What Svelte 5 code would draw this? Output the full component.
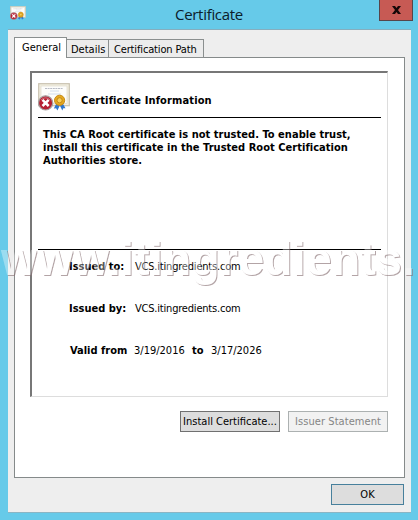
<script>
  const tabs = [
    { label: 'General', cls: 'general' },
    { label: 'Details', cls: 'details' },
    { label: 'Certification Path', cls: 'path' }
  ];
  const message = [
    { text: 'This CA Root certificate is not trusted. To enable trust,', cls: 'm1' },
    { text: 'install this certificate in the Trusted Root Certification', cls: 'm2' },
    { text: 'Authorities store.', cls: 'm3' }
  ];
</script>

{#snippet certificate(size)}
  <svg class="cert" width={size} height={size * 0.875} viewBox="0 0 32 28" aria-hidden="true">
    <rect x="0.7" y="0.7" width="30.6" height="22" fill="#f3efe1" stroke="#c9c2b0" stroke-width="1.2" />
    <rect x="3" y="3" width="26" height="17.5" fill="#fdfdfb" stroke="#dedacc" stroke-width="0.7" />
    <path d="M7 5.5h18" stroke="#b9bcc5" stroke-width="1" stroke-dasharray="2 .6" />
    <path d="M12 8h9M10 11h13" stroke="#c6d5e8" stroke-width="0.8" />
    <path d="M18.5 20l-2.6 5.5 2.2-.2 1.3 2.2 2.7-5.4zM24.5 20l3 5.2-2.2.1-1 2.2-2.7-5.4z" fill="#2f77cf" />
    <circle cx="21.6" cy="17.3" r="5.1" fill="#e6a91e" stroke="#c58a16" stroke-width="1" />
    <circle cx="21.6" cy="17.3" r="2.6" fill="#f6cf58" stroke="#bd8014" stroke-width="0.9" />
    <circle cx="7.6" cy="19.9" r="7.1" fill="#b51f32" stroke="#a8a0a0" stroke-width="1.2" />
    <path d="M3 17a6 6 0 0 1 9.2 0" stroke="#d4727c" fill="none" />
    <path d="M4.500 16.8l6.2 6.2M10.7 16.8l-6.2 6.2" stroke="#fff" stroke-width="2.5" />
  </svg>
{/snippet}

<div class="window">
  <header>
    <span class="appicon">{@render certificate(16)}</span>
    <h1><span>Certificate</span></h1>
    <button class="close" aria-label="Close">
      <svg width="9" height="8" viewBox="0 0 9 8"><path d="M0 0h3l1.5 2L6 0h3L6 4l3 4H6L4.500 6 3 8H0l3-4z" fill="#160808" /></svg>
    </button>
  </header>

  <main>
    <nav>
      {#each tabs as tab}
        <div class="tab {tab.cls}"><span>{tab.label}</span></div>
      {/each}
    </nav>

    <section class="panel">
      <article>
        <div class="heading">
          {@render certificate(32)}
          <b class="info">Certificate Information</b>
        </div>
        <div class="message">
          {#each message as line}
            <div><b class={line.cls}>{line.text}</b></div>
          {/each}
        </div>
        <div class="row to"><b>Issued to:</b><span class="name">VCS.itingredients.com</span></div>
        <div class="row by"><b>Issued by:</b><span class="name">VCS.itingredients.com</span></div>
        <div class="row valid"><b>Valid from</b><span>3/19/2016</span><b class="until">to</b><span>3/17/2026</span></div>
      </article>
      <div class="actions">
        <button class="install"><span>Install Certificate...</span></button>
        <button class="issuer" disabled><span>Issuer Statement</span></button>
      </div>
    </section>

    <footer><button class="ok"><span>OK</span></button></footer>
  </main>

  <div class="watermark">www.itingredients.</div>
  <svg class="defs" width="0" height="0" aria-hidden="true">
    <filter id="emboss" x="-5%" y="-10%" width="110%" height="120%" color-interpolation-filters="sRGB">
      <feOffset in="SourceAlpha" dx="1.2" dy="1.2" result="moved" />
      <feGaussianBlur in="moved" stdDeviation="0.6" result="soft" />
      <feFlood flood-color="#8b7376" flood-opacity="0.65" />
      <feComposite in2="soft" operator="in" result="shade" />
      <feComposite in="shade" in2="SourceAlpha" operator="out" result="edge" />
      <feComponentTransfer in="SourceGraphic" result="fill"><feFuncA type="linear" slope="0.35" /></feComponentTransfer>
      <feMerge><feMergeNode in="edge" /><feMergeNode in="fill" /></feMerge>
    </filter>
  </svg>
</div>

<style>
  .window, .window * { box-sizing: border-box; }
  .window {
    position: relative;
    width: 418px;
    height: 520px;
    overflow: hidden;
    background: #66cae9;
    color: #000;
    font: 11px/13px "DejaVu Sans Condensed", "DejaVu Sans", sans-serif;
    font-stretch: condensed;
    white-space: nowrap;
    padding: 0 7px 7px 8px;
    display: flex;
    flex-direction: column;
  }
  svg { display: block; flex: none; }
  header { height: 29px; display: flex; align-items: flex-start; flex: none; }
  .appicon { width: 26px; padding: 6px 0 0 2px; }
  h1 {
    margin: 0;
    width: 345px;
    padding: 4px 0 0 141px;
    font: 15px/20px "Open Sans", "Noto Sans", sans-serif;
    color: #0b202b;
  }
  h1 span { letter-spacing: -0.3px; }
  button { font: inherit; padding: 0; margin: 0; display: flex; align-items: center; justify-content: center; color: #000; }
  .close { width: 34px; height: 21px; flex: none; background: #c75a54; border: 1px solid #56454a; border-top: 0; margin-right: -2px; }
  main { height: 484px; background: #eee; border-top: 1px solid #86aebe; border-bottom: 1px solid #8ab5c4; padding: 7px 6px 0; }
  nav { display: flex; align-items: flex-end; height: 21px; position: relative; z-index: 1; }
  .tab { height: 19px; background: #ececec; border: 1px solid #8a8f8f; border-left: 0; padding: 3px 0 0 4px; }
  .general { width: 53px; height: 21px; background: #fff; border: 1px solid #8a8f8f; border-bottom: 0; padding: 3px 0 0 7px; }
  .details { width: 42px; }
  .path { width: 95px; padding-left: 5px; }
  .path span { letter-spacing: -0.15px; }
  .panel { height: 421px; margin-top: -1px; width: 391px; background: #fff; border: 1px solid #858a8a; padding: 13px 16px 0 15px; }
  article { width: 358px; height: 326px; border: 2px solid #777; border-right: 1px solid #ddd; border-bottom: 1px solid #ddd; padding: 9px 6px 0; }
  .heading { height: 36px; border-bottom: 1px solid #000; display: flex; padding-top: 1px; }
  .info { margin: 11px 0 0 11px; letter-spacing: 0.13px; }
  .message { height: 132px; border-bottom: 1px solid #000; padding: 10px 0 0 5px; }
  .m1, .m2, .m3 { letter-spacing: 0.035px; }
  .row { display: flex; padding-left: 31px; height: 42px; padding-top: 10px; }
  .row b { width: 66px; }
  .name { letter-spacing: -0.2px; }
  .valid { padding-left: 32px; }
  .valid b { width: 64px; }
  .valid span { width: 58px; }
  .valid .until { width: 19px; }
  .actions { display: flex; gap: 8px; justify-content: flex-end; padding-top: 14px; }
  .actions button { width: 100px; height: 21px; background: #ddd; border: 1px solid #707070; }
  .actions .issuer { background: #f2f2f2; border-color: #acb1b1; color: #858585; letter-spacing: 0.08px; }
  footer { display: flex; justify-content: flex-end; padding: 6px 1px 0 0; }
  .ok { width: 73px; height: 21px; background: #ddd; border: 1px solid #47809c; }
  .watermark {
    position: absolute;
    z-index: 2;
    left: 1px;
    top: 233px;
    font: bold 46px/52px "Liberation Sans", Arial, sans-serif;
    letter-spacing: 0.4px;
    color: #fff;
    filter: url(#emboss);
    pointer-events: none;
  }
  .defs { position: absolute; }
</style>
